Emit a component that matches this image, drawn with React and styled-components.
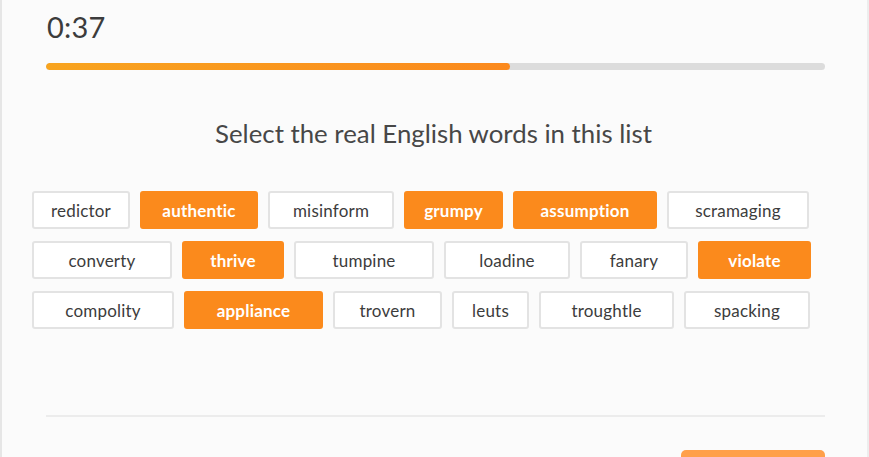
import React from "react";
import styled, { createGlobalStyle } from "styled-components";

const Global = createGlobalStyle`
  html, body { margin: 0; padding: 0; background: #fbfbfb; }
  body { font-family: Lato, "Open Sans", sans-serif; overflow: hidden; }
`;

const Frame = styled.div`
  box-sizing: border-box;
  width: 869px;
  height: 457px;
  border-left: 2px solid #e6e6e6;
  border-right: 2px solid #ededed;
  background: #fbfbfb;
  display: flex;
  flex-direction: column;
  overflow: hidden;
`;

const Header = styled.div`
  padding: 9px 0 0 44px;
  width: 779px;
  display: flex;
  flex-direction: column;
`;

const Timer = styled.div`
  font-size: 29px;
  line-height: 36px;
  color: #3c3c3c;
  letter-spacing: 0.2px;
  padding-left: 1px;
`;

const Track = styled.div`
  margin-top: 18px;
  height: 7px;
  border-radius: 4px;
  background: #dcdcdc;
  overflow: hidden;
`;

const Fill = styled.div`
  height: 100%;
  border-radius: 4px;
  background: linear-gradient(90deg, #f8a41f, #fb891d);
`;

const Question = styled.h1`
  margin: 48px 0 0;
  text-align: center;
  font-weight: 400;
  font-size: 25.8px;
  line-height: 30px;
  color: #474747;
  padding-right: 2px;
`;

const Grid = styled.div`
  margin: 43px 0 0 30px;
  display: flex;
  flex-direction: column;
  gap: 12px;
`;

const Row = styled.div`
  display: flex;
  gap: 10px;
`;

const Chip = styled.div`
  box-sizing: border-box;
  width: ${(p) => p.$w}px;
  height: 38px;
  border-radius: 3px;
  display: flex;
  align-items: center;
  justify-content: center;
  font-size: 17px;
  letter-spacing: 0.2px;
  border: 2px solid ${(p) => (p.$on ? "#fb8a1c" : "#e3e3e3")};
  background: ${(p) => (p.$on ? "#fb8a1c" : "#ffffff")};
  color: ${(p) => (p.$on ? "#ffffff" : "#3c3c3c")};
  font-weight: ${(p) => (p.$on ? 700 : 400)};
`;

const Footer = styled.div`
  margin: 86px 0 0 44px;
  width: 779px;
  display: flex;
  flex-direction: column;
`;

const Divider = styled.div`
  height: 2px;
  background: #ececec;
`;

const Next = styled.div`
  margin-top: 33px;
  align-self: flex-end;
  width: 144px;
  height: 40px;
  border-radius: 5px;
  background: #ffa04a;
`;

const rows = [
  [["redictor", 98], ["authentic", 118, 1], ["misinform", 126], ["grumpy", 99, 1], ["assumption", 144, 1], ["scramaging", 142]],
  [["converty", 140], ["thrive", 102, 1], ["tumpine", 140], ["loadine", 126], ["fanary", 108], ["violate", 113, 1]],
  [["compolity", 142], ["appliance", 139, 1], ["trovern", 109], ["leuts", 77], ["troughtle", 135], ["spacking", 126]],
];

export default function App() {
  return (
    <>
      <Global />
      <Frame>
        <Header>
          <Timer>0:37</Timer>
          <Track>
            <Fill style={{ width: "59.5%" }} />
          </Track>
        </Header>
        <Question>Select the real English words in this list</Question>
        <Grid>
          {rows.map((r, i) => (
            <Row key={i}>
              {r.map(([t, w, on]) => (
                <Chip key={t} $w={w} $on={!!on}>
                  {t}
                </Chip>
              ))}
            </Row>
          ))}
        </Grid>
        <Footer>
          <Divider />
          <Next />
        </Footer>
      </Frame>
    </>
  );
}
